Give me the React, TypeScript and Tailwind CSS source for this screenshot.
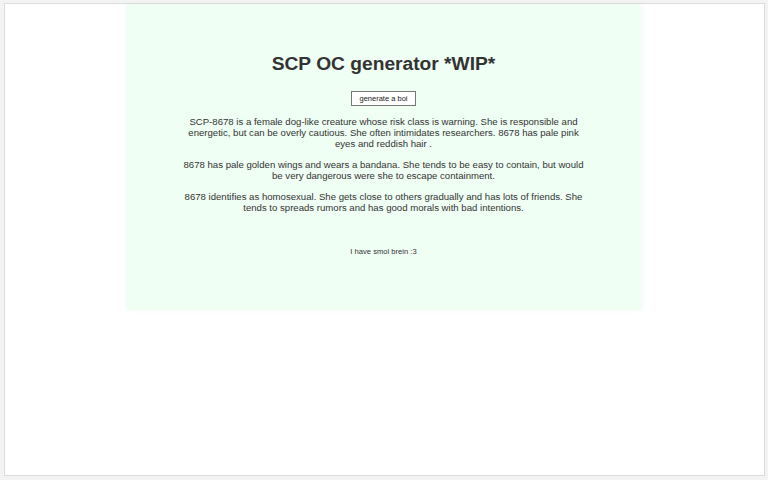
const paragraphs = [
  'SCP-8678 is a female dog-like creature whose risk class is warning. She is responsible and energetic, but can be overly cautious. She often intimidates researchers. 8678 has pale pink eyes and reddish hair .',
  '8678 has pale golden wings and wears a bandana. She tends to be easy to contain, but would be very dangerous were she to escape containment.',
  '8678 identifies as homosexual. She gets close to others gradually and has lots of friends. She tends to spreads rumors and has good morals with bad intentions.',
];

export default function App() {
  return (
    <div className="min-h-[480px] bg-[#f3f3f3] pt-[3px] pl-[4px] pr-[3px] pb-[3px] font-['Liberation_Sans',Arial,sans-serif] text-[#333]">
      <div className="h-[473px] border border-[#dcdcdc] bg-white">
        <div className="ml-[121px] flex w-[515px] flex-col items-center bg-[#effff3] pt-[48px] pb-[53px] shadow-[2px_0_6px_rgba(0,0,0,0.03)]">
          <h1 className="text-[19.2px] font-bold leading-[24px] text-[#333]">SCP OC generator *WIP*</h1>
          <button className="mt-[15px] h-[15px] border border-[#777] bg-white px-[8px] text-[7.5px] leading-[13px] text-[#222]">
            generate a boi
          </button>
          <div className="mt-[10px] flex w-[406px] flex-col gap-[10px] text-center text-[9.6px] leading-[11px]">
            {paragraphs.map((p, i) => (
              <p key={i}>{p}</p>
            ))}
          </div>
          <p className="mt-[34px] text-[7.6px] leading-[10px]">I have smol brein :3</p>
        </div>
      </div>
    </div>
  );
}
